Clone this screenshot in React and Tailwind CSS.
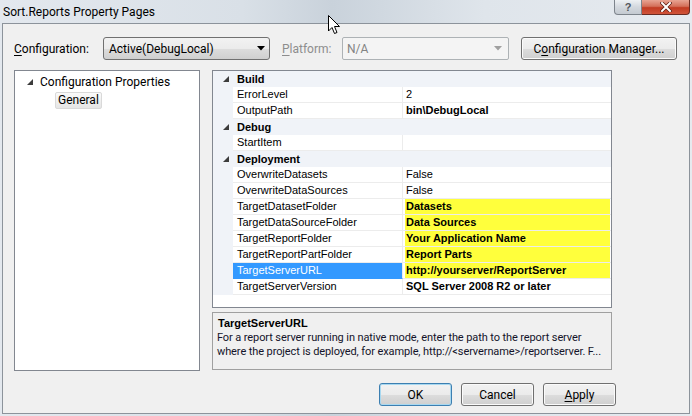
import React from 'react';

const ui = { fontFamily: 'Roboto, "Noto Sans", sans-serif' };
const ms = { fontFamily: '"Liberation Sans", Arial, sans-serif' };

const rows = [
  { cat: 'Build' },
  { name: 'ErrorLevel', value: '2' },
  { name: 'OutputPath', value: 'bin\\DebugLocal', bold: true },
  { cat: 'Debug' },
  { name: 'StartItem', value: '' },
  { cat: 'Deployment' },
  { name: 'OverwriteDatasets', value: 'False' },
  { name: 'OverwriteDataSources', value: 'False' },
  { name: 'TargetDatasetFolder', value: 'Datasets', bold: true, mark: true },
  { name: 'TargetDataSourceFolder', value: 'Data Sources', bold: true, mark: true },
  { name: 'TargetReportFolder', value: 'Your Application Name', bold: true, mark: true },
  { name: 'TargetReportPartFolder', value: 'Report Parts', bold: true, mark: true },
  { name: 'TargetServerURL', value: 'http://yourserver/ReportServer', bold: true, mark: true, selected: true },
  { name: 'TargetServerVersion', value: 'SQL Server 2008 R2 or later', bold: true },
];

const Expander = () => (
  <svg width="6" height="6" viewBox="0 0 6 6">
    <polygon points="6,0 6,6 0,6" fill="#3c3c3c" />
  </svg>
);

const ComboArrow = ({ color = '#000' }) => (
  <svg width="8" height="5" viewBox="0 0 8 5">
    <polygon points="0,0 8,0 4,4.5" fill={color} />
  </svg>
);

const WinButton = ({ children, isDefault, className = '' }) => (
  <button
    className={`h-[23px] rounded-[3px] border text-[12px] text-black bg-[linear-gradient(#f2f2f2_0%,#ebebeb_50%,#dddddd_51%,#cfcfcf_100%)] ${
      isDefault ? 'border-[#3c7fb1] shadow-[inset_0_0_0_1px_#a8d8f0]' : 'border-[#707070] shadow-[inset_0_0_0_1px_#fbfbfb]'
    } ${className}`}
    style={ui}
  >
    {children}
  </button>
);

const PropertyGrid = () => (
  <div className="w-[400px] h-[238px] border border-[#828790] bg-white flex flex-col" style={ms}>
    {rows.map((r, i) =>
      r.cat ? (
        <div key={i} className="h-[16px] flex items-center bg-[#f0f3f8] shrink-0">
          <div className="w-[24px] flex justify-center pl-[2px]">
            <Expander />
          </div>
          <span className="text-[11px] font-bold text-black">{r.cat}</span>
        </div>
      ) : (
        <div key={i} className="h-[16px] flex shrink-0">
          <div className="w-[20px] bg-[#f0f3f8]" />
          <div
            className={`w-[170px] border-b border-r border-[#ececec] flex items-center pl-[4px] text-[11px] ${
              r.selected ? 'bg-[#3399ff] text-white border-b-[#3399ff]' : 'text-black'
            }`}
          >
            {r.name}
          </div>
          <div className="flex-1 border-b border-[#ececec] pl-[2px] pr-[1px] flex">
            <div
              className={`flex-1 flex items-center pl-[1px] text-[11px] text-black ${r.bold ? 'font-bold' : ''} ${
                r.mark ? 'bg-[#ffff3c]' : ''
              }`}
            >
              {r.value}
            </div>
          </div>
        </div>
      )
    )}
  </div>
);

export default function App() {
  return (
    <div className="w-[692px] h-[416px] relative overflow-hidden bg-[linear-gradient(90deg,#e3e8ee_0%,#d9e0e7_35%,#c9d2db_48%,#dfe5eb_70%,#e6eaef_100%)] flex flex-col">
      {/* title bar */}
      <div className="h-[23px] flex justify-between shrink-0">
        <span className="pl-[3px] pt-[3px] text-[12px] text-black" style={ui}>
          Sort.Reports Property Pages
        </span>
        <div className="flex mr-[2px] h-[16px]">
          <div className="w-[28px] h-[15px] border border-[#7d848c] border-t-0 rounded-bl-[4px] bg-[linear-gradient(#eef1f4,#d3d8de_50%,#c4cad1)] flex items-center justify-center text-[11px] text-[#50565c] font-bold" style={ms}>
            ?
          </div>
          <div className="w-[48px] h-[15px] border border-[#6b2b22] border-t-0 border-l-0 rounded-br-[4px] bg-[linear-gradient(#e8a493,#d4705a_45%,#c23b22_55%,#d0543a)] flex items-center justify-center">
            <svg width="12" height="10" viewBox="0 0 12 10">
              <path d="M2 1 L10 9 M10 1 L2 9" stroke="#5a1a10" strokeWidth="3.4" strokeLinecap="square" />
              <path d="M2 1 L10 9 M10 1 L2 9" stroke="#ffffff" strokeWidth="2" strokeLinecap="square" />
            </svg>
          </div>
        </div>
      </div>

      {/* client area */}
      <div className="mx-[2px] h-[391px] border border-[#8c939b] bg-[#f0f0f0] flex flex-col pl-[11px]">
        {/* configuration row */}
        <div className="mt-[13px] h-[23px] flex items-center text-[12px]" style={ui}>
          <span className="w-[89px] text-black">
            <span className="underline underline-offset-2">C</span>onfiguration:
          </span>
          <div className="w-[167px] h-[23px] rounded-[3px] border border-[#707070] bg-[linear-gradient(#f2f2f2_0%,#ebebeb_50%,#dddddd_51%,#cfcfcf_100%)] flex items-center justify-between pl-[5px] pr-[4px] text-black">
            <span>Active(DebugLocal)</span>
            <ComboArrow />
          </div>
          <span className="ml-[12px] w-[60px] text-[#8d8d8d]">
            <span className="underline underline-offset-2">P</span>latform:
          </span>
          <div className="w-[167px] h-[23px] rounded-[2px] border border-[#adb2b5] bg-[#f4f4f4] flex items-center justify-between pl-[4px] pr-[6px] text-[#838383]">
            <span>N/A</span>
            <ComboArrow color="#a0a0a0" />
          </div>
          <WinButton className="ml-[12px] w-[156px]">
            C<span className="underline underline-offset-2">o</span>nfiguration Manager...
          </WinButton>
        </div>

        {/* main panels */}
        <div className="mt-[10px] flex">
          <div className="w-[186px] h-[301px] border border-[#828790] bg-white pt-[2px] text-[12px] text-black" style={ui}>
            <div className="flex items-center h-[18px]">
              <div className="w-[25px] flex justify-end pr-[7px]">
                <Expander />
              </div>
              <span>Configuration Properties</span>
            </div>
            <div className="pl-[40px]">
              <span className="inline-block h-[17px] leading-[15px] px-[2px] border border-[#d9d9d9] rounded-[2px] bg-[linear-gradient(#fafafa,#e5e5e5)]">
                General
              </span>
            </div>
          </div>

          <div className="ml-[12px] flex flex-col">
            <PropertyGrid />
            <div className="mt-[4px] w-[400px] h-[58px] border border-[#a0a0a0] bg-[#f0f0f0] px-[4px] pt-[3px]">
              <div className="text-[11px] font-bold text-black leading-[14px] pl-[1px]" style={ms}>
                TargetServerURL
              </div>
              <div className="text-[11px] text-[#14142a] leading-[14px] mt-[1px] whitespace-nowrap tracking-[-0.1px]" style={ui}>
                <div>For a report server running in native mode, enter the path to the report server</div>
                <div>where the project is deployed, for example, http://&lt;servername&gt;/reportserver. F...</div>
              </div>
            </div>
          </div>
        </div>

        {/* dialog buttons */}
        <div className="mt-[12px] flex w-[602px] justify-end gap-[9px]">
          <WinButton isDefault className="w-[73px]">OK</WinButton>
          <WinButton className="w-[73px]">Cancel</WinButton>
          <WinButton className="w-[73px]">
            <span className="underline underline-offset-2">A</span>pply
          </WinButton>
        </div>
      </div>

      {/* mouse pointer */}
      <svg className="absolute left-[328px] top-[15px]" width="13" height="20" viewBox="0 0 13 20">
        <path d="M0.5 0.5 L0.5 16 L4 12.5 L6.5 18.5 L9 17.5 L6.5 11.5 L11.5 11.5 Z" fill="#fff" stroke="#000" strokeWidth="1" strokeLinejoin="miter" />
      </svg>
    </div>
  );
}
